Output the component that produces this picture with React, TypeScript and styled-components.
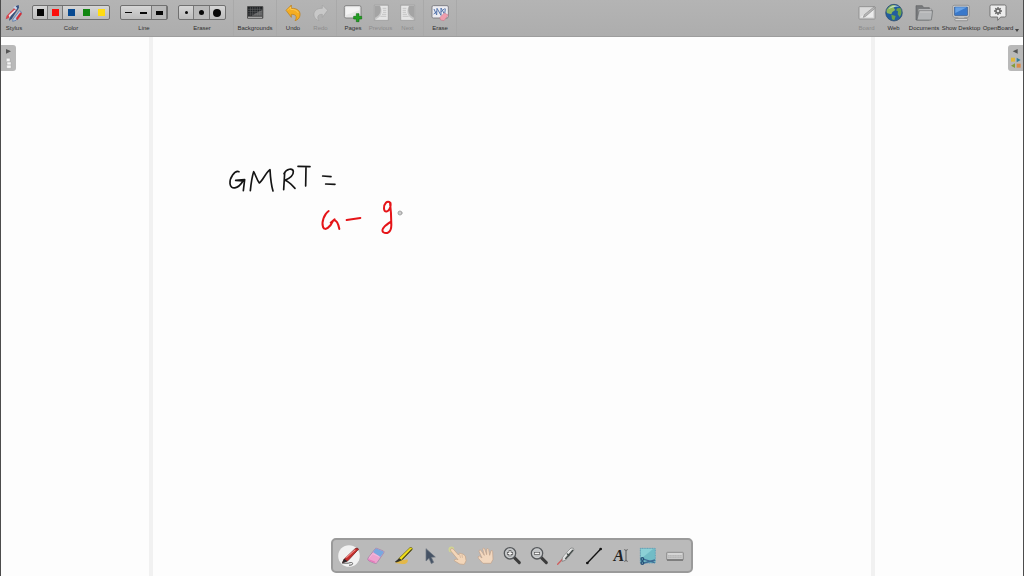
import React from "react";
import styled, { createGlobalStyle } from "styled-components";

const GlobalStyle = createGlobalStyle`
  * { box-sizing: border-box; }
  body {
    margin: 0;
    background: #fdfdfd;
    font-family: "Liberation Sans", sans-serif;
  }
  button { font: inherit; color: inherit; border: 0; padding: 0; background: none; }
`;

const Shell = styled.div`
  min-height: 100vh;
  display: flex;
  flex-direction: column;
  border-left: 1px solid #4c4c4c;
  border-right: 1px solid #4c4c4c;
`;

const TopBar = styled.header`
  display: flex;
  justify-content: space-between;
  height: 37px;
  background: linear-gradient(#b4b4b4, #adadad);
  border-bottom: 1px solid #9d9d9d;
`;

const Section = styled.div`
  display: flex;
  align-items: stretch;
  padding-right: 4px;
`;

const ToolButton = styled.button<{ $width: number }>`
  width: ${(p) => p.$width}px;
  height: 36px;
  display: flex;
  flex-direction: column;
  align-items: center;
  padding-top: 3px;
  gap: 1px;
  color: #303030;
  &:disabled { color: #8c8c8c; }
  &:disabled svg { opacity: 0.85; }
`;

const Caption = styled.span`
  font-size: 6px;
  line-height: 8px;
  white-space: nowrap;
`;

const Divider = styled.span`
  width: 1px;
  margin: 0 2px;
  background: #a9a9a9;
`;

const Group = styled.div`
  display: flex;
  flex-direction: column;
  align-items: center;
  gap: 4px;
  padding-top: 5px;
  margin: 0 5px;
  color: #303030;
`;

const Segments = styled.div<{ $width: number }>`
  display: flex;
  width: ${(p) => p.$width}px;
  height: 15px;
  border: 1px solid #707070;
  border-radius: 2px;
  background: linear-gradient(#d6d6d6, #bcbcbc);
`;

const Segment = styled.button`
  flex: 1;
  display: grid;
  place-items: center;
  &[aria-pressed="true"] {
    background: #b9b9b9;
    box-shadow: -1px 0 #777, inset -1px 0 #777;
  }
`;

const Mark = styled.span<{ $w: number; $h: number; $color?: string; $round?: boolean }>`
  width: ${(p) => p.$w}px;
  height: ${(p) => p.$h}px;
  background: ${(p) => p.$color ?? "#080808"};
  border-radius: ${(p) => (p.$round ? "50%" : "0")};
`;

const MenuArrow = styled.span`
  align-self: flex-end;
  margin-bottom: 4px;
  border: 2px solid transparent;
  border-top: 3px solid #444;
  border-bottom: 0;
`;

const Board = styled.main`
  position: relative;
  flex: 1;
  display: flex;
  justify-content: center;
`;

const Sheet = styled.section`
  position: relative;
  width: 71%;
  border: solid #f1f1f1;
  border-width: 0 4px;
`;

const Ink = styled.svg`
  position: absolute;
  left: 67px;
  top: 118px;
  width: 200px;
  height: 90px;
  fill: none;
  stroke-linecap: round;
  stroke-linejoin: round;
`;

const SideTab = styled.button<{ $side: "left" | "right" }>`
  position: absolute;
  top: 8px;
  ${(p) => p.$side}: 0;
  width: 15px;
  height: 26px;
  background: #b9b9b9;
  border-radius: ${(p) => (p.$side === "left" ? "0 3px 3px 0" : "3px 0 0 3px")};
  svg { display: block; width: 15px; height: 26px; }
`;

const Palette = styled.nav`
  position: absolute;
  bottom: 3px;
  left: 50%;
  transform: translateX(-50%);
  width: 362px;
  height: 35px;
  display: grid;
  grid-template-columns: repeat(13, 1fr);
  padding: 0 2px;
  border: 2px solid #9a9a9a;
  border-radius: 5px;
  background: #bababa;
`;

const PaletteButton = styled.button`
  display: grid;
  place-items: center;
`;

const Glyph = styled.svg<{ $size?: number }>`
  display: block;
  width: ${(p) => p.$size ?? 20}px;
  height: ${(p) => p.$size ?? 20}px;
  flex: none;
`;

const Icon = ({ children, size }: { children: React.ReactNode; size?: number }) => (
  <Glyph viewBox="0 0 60 60" $size={size} aria-hidden="true">{children}</Glyph>
);

const StylusIcon = () => (
  <Icon>
    <path d="M16 47 36 9l8-3 1 8-22 34-8 5z" fill="#35517f" />
    <path d="m28 13 6-4 6 6-5 8z" fill="#c5d3e9" />
    <path d="m8 38 22-22 6 5-23 25-8 3z" fill="#d4434b" />
    <path d="m14 37 18-17 3 3-19 20z" fill="#ece6ec" />
    <path d="m27 48 20-25 6 5-17 24-10 3z" fill="#b9cbe5" stroke="#496ca8" strokeWidth="2" />
    <path d="m36 46 13-18 5 4-14 20z" fill="#cf3039" />
  </Icon>
);

const BackgroundsIcon = () => (
  <Icon>
    <rect x="6" y="9" width="49" height="38" rx="3" fill="#515151" />
    <rect x="9" y="12" width="43" height="26" fill="#202326" />
    <path d="M9 19h43M9 26h43M9 33h43M16 12v26M23 12v26M30 12v26M37 12v26M44 12v26" stroke="#6d6d6d" strokeWidth="1.5" />
    <path d="M20 38h32V20z" fill="#8b8b8b" opacity=".6" />
    <path d="M9 43h42" stroke="#b9b9b9" strokeWidth="3" />
  </Icon>
);

const UndoIcon = () => (
  <Icon>
    <path d="M9 22 25 6v10c20-1 30 11 25 25-2 6-7 10-14 12 7-10 4-20-11-19v9z" fill="#f4ad22" stroke="#b97b16" strokeWidth="2" strokeLinejoin="round" />
    <path d="m13 22 10-10v7c12 0 20 4 23 11" fill="none" stroke="#ffd76b" strokeWidth="2" />
  </Icon>
);

const RedoIcon = () => (
  <Icon>
    <path d="M50 22 34 6v10C14 15 5 28 10 41c2 6 7 10 14 12-7-10-4-20 10-19v9z" fill="#cdcdcd" stroke="#a0a0a0" strokeWidth="2" strokeLinejoin="round" />
  </Icon>
);

const PagesIcon = () => (
  <Icon>
    <rect x="4" y="8" width="50" height="37" rx="5" fill="#e6e6e6" stroke="#777" strokeWidth="2.5" />
    <path d="M9 13h40v9L9 36z" fill="#f3f3f3" />
    <path d="M40 32h8v8h8v8h-8v8h-8v-8h-8v-8h8z" fill="#22a022" stroke="#147315" strokeWidth="2" />
  </Icon>
);

const PageTurnIcon = ({ next }: { next?: boolean }) => (
  <Icon>
    <g transform={next ? "translate(60 0) scale(-1 1)" : undefined}>
      <path d="M10 6h42v46H10z" fill="#cacaca" stroke="#9a9a9a" strokeWidth="2" />
      <path d="M12 8h14c6 12 4 27-14 36z" fill="#a2a2a2" />
      <path d="M28 9h22v41H13c20-10 22-24 15-41z" fill="#efefef" />
      <path d="M35 16h11M36 22h10M36 28h10M33 34h13M28 40h18" stroke="#b3b3b3" strokeWidth="2" />
    </g>
  </Icon>
);

const EraseIcon = () => (
  <Icon>
    <rect x="6" y="8" width="49" height="37" rx="4" fill="#ececf1" stroke="#747478" strokeWidth="2.5" />
    <path d="m12 18 8 18 1-20 12 21V15l11 19 2-17M11 33l10-8m11 2 12-10" fill="none" stroke="#5374ac" strokeWidth="3" />
    <path d="m29 44 14-14 12 6-13 17-10-2z" fill="#ef9eae" stroke="#c17584" strokeWidth="1.5" />
  </Icon>
);

const BoardIcon = () => (
  <Icon>
    <rect x="6" y="11" width="48" height="37" rx="2" fill="#e1e1e1" stroke="#848484" strokeWidth="2.5" />
    <path d="M10 43 48 14v29z" fill="#f6f6f6" />
    <path d="m19 43 3-8 30-24 3 4-29 25z" fill="#b8b8b8" stroke="#818181" strokeWidth="2" />
  </Icon>
);

const WebIcon = () => (
  <Icon>
    <circle cx="30" cy="29" r="25" fill="#225d9f" stroke="#264562" strokeWidth="2" />
    <path d="M15 12c8-7 15-7 21-4l-7 6 5 7-9 6-3 7-12-3c-5-6-1-14 5-19z" fill="#8db65b" />
    <path d="m40 16 9-1c5 8 5 19-2 27l-6-8 1-9-6-3zM22 35l13 4-4 13-7-3z" fill="#6ca249" />
    <path d="M13 19c8-12 22-15 33-7-12-2-22 1-33 7z" fill="#d8edfa" opacity=".65" />
  </Icon>
);

const DocumentsIcon = () => (
  <Icon>
    <path d="M6 8h19l4 6h17v37H6z" fill="#77797b" stroke="#5f6163" strokeWidth="2" />
    <path d="M13 18h40v25H13z" fill="#d0d1d2" stroke="#85878a" strokeWidth="2" />
    <path d="M15 23h41l-4 28H9z" fill="#b4b6b8" stroke="#696c6e" strokeWidth="2" />
    <path d="M18 27h33" stroke="#d4d4d4" strokeWidth="2" />
  </Icon>
);

const DesktopIcon = () => (
  <Icon>
    <rect x="6" y="7" width="48" height="35" rx="3" fill="#e5e5e3" stroke="#757575" strokeWidth="2" />
    <rect x="11" y="12" width="38" height="25" fill="#3978ca" stroke="#244b84" strokeWidth="2" />
    <path d="M13 30V13h35z" fill="#68a2e5" />
    <path d="M23 42h16l4 7H18z" fill="#b9b9b7" />
    <rect x="12" y="47" width="38" height="6" rx="2" fill="#e4e4e4" stroke="#747474" strokeWidth="2" />
  </Icon>
);

const OpenBoardIcon = () => (
  <Icon>
    <path d="M10 6h40q4 0 4 4v28q0 4-4 4H38l-9 10v-10H10q-4 0-4-4V10q0-4 4-4z" fill="#ececec" stroke="#666" strokeWidth="2.5" />
    <path d="M30 12v24M18 24h24M22 16l16 16M38 16 22 32" stroke="#666" strokeWidth="4" />
    <circle cx="30" cy="24" r="8" fill="#666" />
    <circle cx="30" cy="24" r="4" fill="#e8e8e8" />
  </Icon>
);

const PenIcon = () => (
  <Icon size={24}>
    <circle cx="30" cy="30" r="27" fill="#f1f1f1" />
    <path d="m17 39 28-27q6-4 9 1L27 42l-13 5z" fill="#c52c2b" stroke="#762325" strokeWidth="2" />
    <path d="m23 34 23-20" stroke="#ef8c87" strokeWidth="3" />
    <path d="m18 37 8 6-14 5z" fill="#29292b" />
    <path d="M13 48h15q11-4 11 1t-9 4" fill="none" stroke="#606060" strokeWidth="2.5" />
  </Icon>
);

const EraserIcon = () => (
  <Icon size={20}>
    <path d="m6 36 21-27q2-3 5-2l20 8q4 2 1 6L34 49q-3 5-8 3L9 45q-6-3-3-9z" fill="#eda3cf" stroke="#9c7ca1" strokeWidth="2" />
    <path d="m21 18 7-9q2-2 5-1l18 8q4 2 1 5l-9 12z" fill="#78a8de" />
    <path d="m7 39 21 8-2 4-16-7q-4-2-3-5z" fill="#e57aba" />
    <path d="m10 35 10-12 20 9" fill="none" stroke="#f5c8e2" strokeWidth="2" />
  </Icon>
);

const MarkerIcon = () => (
  <Icon size={22}>
    <path d="M8 49c14-9 20-7 28-9q9-3 7 4-2 8-15 8z" fill="#e3b84a" />
    <path d="m20 35 29-28q6-2 7 4L27 41l-13 5z" fill="#f1df18" stroke="#6a6424" strokeWidth="2" />
    <path d="m20 36 7 5-16 7-3-2z" fill="#333329" />
    <path d="m28 39 26-27" stroke="#4c471a" strokeWidth="3" />
  </Icon>
);

const SelectIcon = () => (
  <Icon>
    <path d="M18 8v37l9-8 7 16 7-4-7-15 12-1z" fill="#465365" stroke="#6e7782" strokeWidth="2" />
  </Icon>
);

const PointIcon = () => (
  <Icon size={22}>
    <circle cx="12" cy="12" r="8" fill="#dce27e" opacity=".65" />
    <path d="M10 11q3-4 7 0l14 16 3-5 6 2 4 1 6 5 2 13-5 10-12-1-15-9q-1-5 6-4l4 1-20-24z" fill="#f3d6b9" stroke="#c2a58b" strokeWidth="2" strokeLinejoin="round" />
    <path d="m34 25 3 10m4-8 1 8" stroke="#c2a58b" strokeWidth="1.5" />
  </Icon>
);

const HandIcon = () => (
  <Icon size={20}>
    <path d="M24 52 11 38q-5-7 2-8l8 6-9-20q0-5 5-4l11 16-5-19q2-5 6-1l6 18V9q4-4 6 1l3 18 4-14q5-2 5 3l1 23-6 12z" fill="#f2d7be" stroke="#bfa089" strokeWidth="2" strokeLinejoin="round" />
  </Icon>
);

const ZoomIcon = ({ plus }: { plus?: boolean }) => (
  <Icon>
    <path d="m37 35 15 15" stroke="#3c3c3c" strokeWidth="9" strokeLinecap="round" />
    <circle cx="24" cy="22" r="17" fill="#b5b9bc" stroke="#55585b" strokeWidth="4" />
    <circle cx="24" cy="22" r="13" fill="#bfc2c4" stroke="#d5d5d5" strokeWidth="2" />
    <path d={plus ? "M15 22h18M24 13v18" : "M15 22h18"} stroke="#555" strokeWidth="8" />
    <path d={plus ? "M17 22h14M24 15v14" : "M17 22h14"} stroke="#f8f8f8" strokeWidth="4" />
  </Icon>
);

const LaserIcon = () => (
  <Icon>
    <path d="M5 55 23 36" stroke="#cf5e5e" strokeWidth="4" strokeLinecap="round" />
    <path d="m19 35 26-29q9-2 9 6L28 43l-10 3z" fill="#dcdddd" stroke="#6f7372" strokeWidth="2" />
    <path d="M28 39 51 12M32 22l8 8" stroke="#434a48" strokeWidth="4" />
    <path d="m24 32 20-22" stroke="#fff" strokeWidth="2" />
  </Icon>
);

const LineIcon = () => (
  <Icon>
    <path d="M10 51 50 9" stroke="#111" strokeWidth="4" />
    <circle cx="10" cy="51" r="4" fill="#111" />
    <circle cx="50" cy="9" r="4" fill="#111" />
  </Icon>
);

const TextMark = styled.span`
  display: flex;
  align-items: center;
  font-family: "Liberation Serif", serif;
  font-size: 16px;
  line-height: 20px;
  font-style: italic;
  font-weight: 700;
  color: #222;
`;

const CursorMark = styled.svg`
  width: 4px;
  height: 13px;
`;

const CaptureIcon = () => (
  <Icon>
    <rect x="7" y="7" width="45" height="44" fill="#72bcc6" stroke="#5a9db8" strokeWidth="2.5" strokeDasharray="3 2" />
    <path d="M9 9h36L9 38z" fill="#8cd0d6" />
    <path d="m18 40 32 10M18 51l33-9" stroke="#3e6b94" strokeWidth="4" />
    <circle cx="13" cy="39" r="4" fill="none" stroke="#244e77" strokeWidth="4" />
    <circle cx="13" cy="51" r="4" fill="none" stroke="#244e77" strokeWidth="4" />
  </Icon>
);

const KeyboardIcon = () => (
  <Icon>
    <rect x="5" y="19" width="50" height="23" rx="2" fill="#c9c9c9" stroke="#848484" strokeWidth="2.5" />
    <path d="M9 24h42" stroke="#e2e2e2" strokeWidth="3" />
    <path d="M9 29h42M9 34h42" stroke="#aaa" strokeWidth="2" strokeDasharray="4 1" />
    <path d="M6 42h48" stroke="#6c6c6c" strokeWidth="4" />
  </Icon>
);

type ToolProps = { label: string; width: number; disabled?: boolean; children: React.ReactNode };
const Tool = ({ label, width, disabled, children }: ToolProps) => (
  <ToolButton type="button" $width={width} disabled={disabled}>
    {children}
    <Caption>{label}</Caption>
  </ToolButton>
);

type MarkSpec = { name: string; w: number; h: number; color?: string; round?: boolean };
type ChoicesProps = { label: string; items: MarkSpec[]; active: number; width: number };
const Choices = ({ label, items, active, width }: ChoicesProps) => (
  <Group role="group" aria-label={label}>
    <Segments $width={width}>
      {items.map((m, i) => (
        <Segment key={m.name} type="button" aria-label={m.name} aria-pressed={i === active}>
          <Mark $w={m.w} $h={m.h} $color={m.color} $round={m.round} />
        </Segment>
      ))}
    </Segments>
    <Caption>{label}</Caption>
  </Group>
);

const colors: MarkSpec[] = [
  { name: "Black", w: 7, h: 7, color: "#050505" },
  { name: "Red", w: 7, h: 7, color: "#fb0f0c" },
  { name: "Blue", w: 7, h: 7, color: "#084a91" },
  { name: "Green", w: 7, h: 7, color: "#118611" },
  { name: "Yellow", w: 7, h: 7, color: "#ffdc12" },
];
const lines: MarkSpec[] = [
  { name: "Fine line", w: 7, h: 1 },
  { name: "Medium line", w: 7, h: 2 },
  { name: "Strong line", w: 7, h: 4 },
];
const erasers: MarkSpec[] = [
  { name: "Small eraser", w: 3, h: 3, round: true },
  { name: "Medium eraser", w: 5, h: 5, round: true },
  { name: "Large eraser", w: 8, h: 8, round: true },
];

const paletteTools: { name: string; icon: React.ReactNode }[] = [
  { name: "Pen", icon: <PenIcon /> },
  { name: "Eraser", icon: <EraserIcon /> },
  { name: "Highlighter", icon: <MarkerIcon /> },
  { name: "Select", icon: <SelectIcon /> },
  { name: "Interact", icon: <PointIcon /> },
  { name: "Scroll page", icon: <HandIcon /> },
  { name: "Zoom in", icon: <ZoomIcon plus /> },
  { name: "Zoom out", icon: <ZoomIcon /> },
  { name: "Laser pointer", icon: <LaserIcon /> },
  { name: "Draw line", icon: <LineIcon /> },
  {
    name: "Write text",
    icon: (
      <TextMark>
        A
        <CursorMark viewBox="0 0 12 39" aria-hidden="true">
          <path d="M1 2q4 0 5 3 1-3 5-3M6 5v29M1 37q4 0 5-3 1 3 5 3" fill="none" stroke="#444" strokeWidth="2.5" />
        </CursorMark>
      </TextMark>
    ),
  },
  { name: "Capture", icon: <CaptureIcon /> },
  { name: "Virtual keyboard", icon: <KeyboardIcon /> },
];

export default function App() {
  return (
    <Shell>
      <GlobalStyle />
      <TopBar>
        <Section>
          <Tool label="Stylus" width={26}><StylusIcon /></Tool>
          <Choices label="Color" items={colors} active={1} width={78} />
          <Choices label="Line" items={lines} active={2} width={48} />
          <Choices label="Eraser" items={erasers} active={1} width={48} />
          <Divider />
          <Tool label="Backgrounds" width={38}><BackgroundsIcon /></Tool>
          <Divider />
          <Tool label="Undo" width={28}><UndoIcon /></Tool>
          <Tool label="Redo" width={27} disabled><RedoIcon /></Tool>
          <Divider />
          <Tool label="Pages" width={28}><PagesIcon /></Tool>
          <Tool label="Previous" width={27} disabled><PageTurnIcon /></Tool>
          <Tool label="Next" width={27} disabled><PageTurnIcon next /></Tool>
          <Divider />
          <Tool label="Erase" width={28}><EraseIcon /></Tool>
          <Divider />
        </Section>
        <Section>
          <Tool label="Board" width={27} disabled><BoardIcon /></Tool>
          <Tool label="Web" width={27}><WebIcon /></Tool>
          <Tool label="Documents" width={34}><DocumentsIcon /></Tool>
          <Tool label="Show Desktop" width={40}><DesktopIcon /></Tool>
          <Tool label="OpenBoard" width={34}><OpenBoardIcon /></Tool>
          <MenuArrow />
        </Section>
      </TopBar>
      <Board>
        <Sheet aria-label="Page">
          <Ink viewBox="0 0 600 270" role="img" aria-label="Handwritten notes">
            <g stroke="#141414" strokeWidth="5">
              <path d="M57 50c-13-5-29 20-27 36 2 19 24 17 39-8l-22-2 27-2-4 33" />
              <path d="M91 107c2-20 5-42 10-57 6 10 10 26 17 34 11-8 17-28 32-40 1 18 3 45 9 64" />
              <path d="M194 54l-3 50M192 56c8-16 26-17 28-7 1 13-16 23-25 27 12 4 20 14 30 24" />
              <path d="M234 34l36 1M258 36l-1 57" />
              <path d="M308 63l25 2M317 87l28 1" />
            </g>
            <g stroke="#e51418" strokeWidth="6">
              <path d="M326 168c-14 9-22 35-17 48 6 14 22 0 31-20 9-3 15 10 18 26M344 193l-12 10" />
              <path d="M380 195l41-6" />
              <path d="M511 143c-10-8-19 3-19 17 0 13 13 14 19-4 2-10 0-15-1-13 3 23 4 47 4 67 0 24-15 28-25 21-7-10 9-21 24-31" />
            </g>
            <circle cx="540" cy="174" r="6" fill="#ccc" stroke="#a5a5a5" strokeWidth="3" />
          </Ink>
        </Sheet>
        <SideTab type="button" $side="left" aria-label="Show page navigator">
          <svg viewBox="0 0 45 78" aria-hidden="true">
            <path d="m15 12 15 7-15 7z" fill="#555" />
            <path d="M16 40h11v10H16zM18 51h12v9H18zM17 60h13v10H17z" fill="#f5f5f5" stroke="#999" strokeWidth="1" />
          </svg>
        </SideTab>
        <SideTab type="button" $side="right" aria-label="Show library">
          <svg viewBox="0 0 45 78" aria-hidden="true">
            <path d="m29 12-15 7 15 7z" fill="#555" />
            <path d="M9 38h12v12H9z" fill="#e0b83d" />
            <path d="m26 38 12 7-12 7z" fill="#357e9c" />
            <path d="M21 55v14l-12-7z" fill="#849d3d" />
            <path d="M26 56h12v12H26z" fill="#dc8b48" />
          </svg>
        </SideTab>
        <Palette aria-label="Drawing tools">
          {paletteTools.map((t) => (
            <PaletteButton key={t.name} type="button" aria-label={t.name}>{t.icon}</PaletteButton>
          ))}
        </Palette>
      </Board>
    </Shell>
  );
}
